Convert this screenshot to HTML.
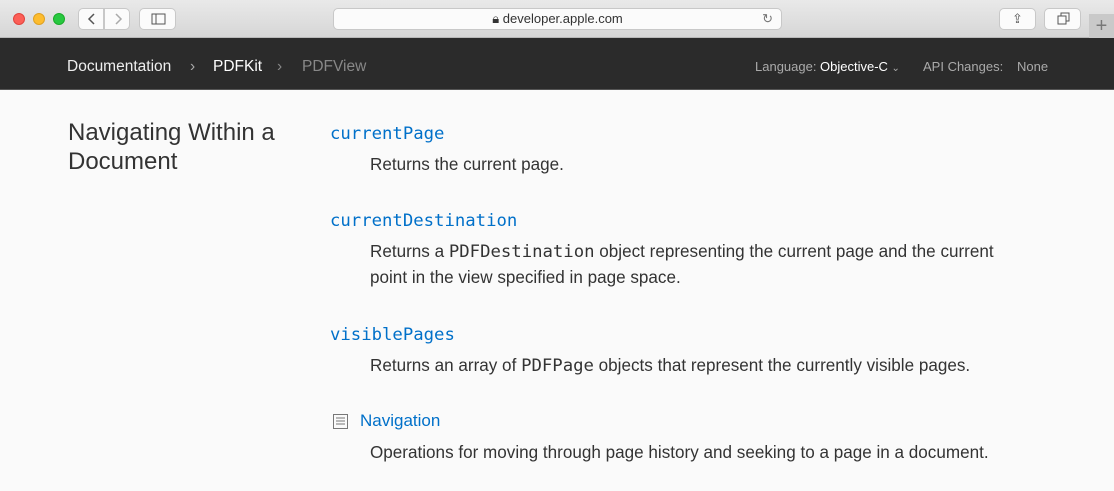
<!DOCTYPE html>
<html><head><style>
*{margin:0;padding:0;box-sizing:border-box}
body{width:1114px;height:491px;overflow:hidden;background:#fafafa;font-family:"Liberation Sans",sans-serif;position:relative}
.tb{position:absolute;left:0;top:0;width:1114px;height:38px;background:linear-gradient(#e9e9e9,#d6d6d6);border-bottom:1px solid #b8b8b8}
.dot{position:absolute;top:13px;width:12px;height:12px;border-radius:50%}
.btn{position:absolute;top:8px;height:22px;background:#fbfbfb;border:1px solid #c8c8c8;border-radius:5px}
.nav{position:absolute;left:0;top:38px;width:1114px;height:52px;background:#2b2b2b;border-bottom:1px solid #555}
.nav span{position:absolute;top:20px;font-size:15.5px}
.sm{font-size:13px!important;top:21px!important}
.abs{position:absolute}
.code{font-family:"DejaVu Sans Mono","Liberation Mono",monospace;color:#0070c9;font-size:17.3px}
.desc{font-size:17.1px;color:#333;line-height:26px}
.mono{font-family:"DejaVu Sans Mono",monospace;font-size:17.3px}
</style></head><body>
<div class="tb">
<div class="dot" style="left:13px;background:#fc5f57;border:1px solid #e0443e"></div>
<div class="dot" style="left:33px;background:#fdbc2e;border:1px solid #dea123"></div>
<div class="dot" style="left:53px;background:#28c840;border:1px solid #1aab29"></div>
<div class="btn" style="left:78px;width:26px;border-radius:5px 0 0 5px"><svg width="26" height="20"><path d="M15 5l-5 5 5 5" stroke="#555" stroke-width="1.5" fill="none"/></svg></div>
<div class="btn" style="left:104px;width:26px;border-radius:0 5px 5px 0"><svg width="26" height="20"><path d="M11 5l5 5-5 5" stroke="#aaa" stroke-width="1.5" fill="none"/></svg></div>
<div class="btn" style="left:139px;width:37px"><svg width="37" height="20"><rect x="12" y="5" width="13" height="10" stroke="#555" fill="none"/><line x1="16" y1="5" x2="16" y2="15" stroke="#555"/></svg></div>
<div class="btn" style="left:333px;width:449px;text-align:center;font-size:13px;color:#333;line-height:20px">🔒︎ developer.apple.com<span style="position:absolute;right:8px;color:#777">↻</span></div>
<div class="btn" style="left:999px;width:37px;text-align:center;font-size:13px;line-height:20px;color:#555">⇪</div>
<div class="btn" style="left:1044px;width:37px"><svg width="37" height="20"><rect x="13" y="7" width="8" height="8" stroke="#555" fill="none"/><path d="M16 7V4h8v8h-3" stroke="#555" fill="none"/></svg></div>
<div class="abs" style="left:1089px;top:14px;width:25px;height:24px;background:#c9c9c9;color:#777;font-size:20px;text-align:center;line-height:24px">+</div>
</div>
<div class="nav">
<span style="left:67px;color:#eee">Documentation</span>
<span style="left:190px;color:#aaa">›</span>
<span style="left:213px;color:#fff">PDFKit</span>
<span style="left:277px;color:#888">›</span>
<span style="left:302px;color:#888">PDFView</span>
<span class="sm" style="left:755px;color:#aaa">Language:</span>
<span class="sm" style="left:820px;color:#fff">Objective-C <span style="position:static;color:#aaa;font-size:10px">⌄</span></span>
<span class="sm" style="left:923px;color:#aaa">API Changes:</span>
<span class="sm" style="left:1017px;color:#aaa">None</span>
</div>
<div class="abs" style="left:68px;top:118px;font-size:24px;line-height:29px;color:#333">Navigating Within a<br>Document</div>
<div class="abs code" style="left:330px;top:124px">currentPage</div>
<div class="abs desc" style="left:370px;top:152px">Returns the current page.</div>
<div class="abs code" style="left:330px;top:211px">currentDestination</div>
<div class="abs desc" style="left:370px;top:239px">Returns a <span class="mono">PDFDestination</span> object representing the current page and the current<br>point in the view specified in page space.</div>
<div class="abs code" style="left:330px;top:325px">visiblePages</div>
<div class="abs desc" style="left:370px;top:353px">Returns an array of <span class="mono">PDFPage</span> objects that represent the currently visible pages.</div>
<svg class="abs" style="left:333px;top:414px" width="16" height="16"><rect x="0.5" y="0.5" width="14" height="14" fill="none" stroke="#777"/><path d="M3 4h9M3 7h9M3 10h9" stroke="#777"/></svg>
<div class="abs" style="left:360px;top:411px;font-size:17px;color:#0070c9">Navigation</div>
<div class="abs desc" style="left:370px;top:440px">Operations for moving through page history and seeking to a page in a document.</div>
</body></html>
